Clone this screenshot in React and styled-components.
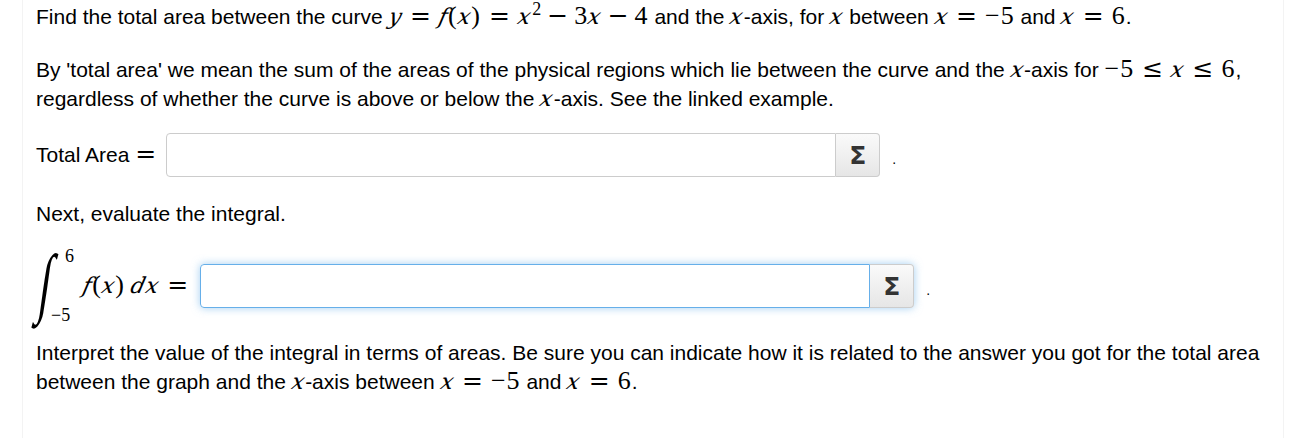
import styled, { createGlobalStyle } from "styled-components";

const Global = createGlobalStyle`
  body {
    margin: 0;
    background: #ffffff;
    color: #000;
    font-family: "Liberation Sans", Arial, sans-serif;
  }
`;

const Page = styled.div`
  margin-left: 22px;
  width: 1262px;
  min-height: 438px;
  box-sizing: border-box;
  border-left: 1px solid #f3f3f3;
  border-right: 1px solid #f3f3f3;
  padding: 2px 0 0 13px;
`;

const Para = styled.p`
  margin: 0 0 ${(p) => p.$after || 24}px;
  font-size: 21px;
  line-height: 29px;
  white-space: nowrap;
`;

// math variables (slanted) and numbers (upright)
const M = styled.span`
  display: inline-block;
  font-family: ${(p) =>
    p.$up ? `"Liberation Serif", "Times New Roman", serif` : `"DejaVu Serif", serif`};
  font-size: ${(p) => (p.$up ? 26 : 22)}px;
  line-height: 0;
  letter-spacing: 1px;
  font-style: ${(p) => (p.$up ? "normal" : "italic")};
  transform: ${(p) => (p.$up ? "none" : "skewX(-13deg)")};
`;

// relations and binary operators
const Op = styled.span`
  font-family: "DejaVu Serif", serif;
  font-size: 25px;
  line-height: 0;
  padding: 0 ${(p) => (p.$bin ? 6 : p.$tight ? 0 : 8)}px;
`;

const Sup = styled.sup`
  font-family: "Liberation Serif", "Times New Roman", serif;
  font-size: 18px;
  font-style: normal;
  vertical-align: 9px;
  line-height: 0;
  margin-left: 1px;
`;

const AnswerRow = styled.div`
  display: flex;
  align-items: center;
  height: ${(p) => p.$h || 44}px;
  margin-bottom: ${(p) => p.$after || 22}px;
  font-size: 21px;
`;

const Label = styled.span`
  margin-right: ${(p) => p.$gap ?? 10}px;
  white-space: nowrap;
`;

const Group = styled.div`
  display: flex;
  height: 44px;
  width: 714px;
  border-radius: 4px;
  box-shadow: ${(p) => (p.$focus ? "0 0 8px rgba(102, 175, 233, 0.6)" : "none")};
`;

const Field = styled.input`
  flex: 1;
  box-sizing: border-box;
  height: 44px;
  border: 1px solid ${(p) => (p.$focus ? "#66afe9" : "#cccccc")};
  border-radius: 4px 0 0 4px;
  outline: none;
  background: #fff;
  padding: 6px 12px;
  font-size: 16px;
`;

const SigmaButton = styled.button`
  width: 44px;
  height: 44px;
  box-sizing: border-box;
  border: 1px solid #cccccc;
  border-left: none;
  border-radius: 0 4px 4px 0;
  background: linear-gradient(#fafafa, #e6e6e6);
  color: #333;
  font-family: "DejaVu Sans", sans-serif;
  font-weight: bold;
  font-size: 25px;
  padding: 0;
  display: flex;
  align-items: center;
  justify-content: center;
`;

const Dot = styled.span`
  margin: 8px 0 0 12px;
  font-size: 14px;
  line-height: 1;
`;

const Integral = styled.div`
  position: relative;
  display: flex;
  align-items: center;
  width: 47px;
  height: 76px;
`;

const IntSign = styled.span`
  font-family: "Liberation Serif", serif;
  font-size: 44px;
  display: inline-block;
  transform: scaleY(1.75) skewX(-14deg);
  line-height: 1;
  margin: -6px 0 0 4px;
`;

const Limit = styled.span`
  position: absolute;
  left: ${(p) => p.$left}px;
  ${(p) => (p.$top ? "top: -2px;" : "bottom: -2px;")}
  font-family: "Liberation Serif", "Times New Roman", serif;
  font-size: 18px;
`;

const AnswerInput = ({ focus }) => (
  <Group $focus={focus}>
    <Field $focus={focus} type="text" />
    <SigmaButton type="button">Σ</SigmaButton>
  </Group>
);

export default function App() {
  return (
    <>
      <Global />
      <Page>
        <Para>
          Find the total area between the curve <M>y</M>
          <Op>=</Op>
          <M>f</M>
          <M $up>(</M>
          <M>x</M>
          <M $up>)</M>
          <Op>=</Op>
          <M>x</M>
          <Sup>2</Sup>
          <Op $bin>−</Op>
          <M $up>3</M>
          <M>x</M>
          <Op $bin>−</Op>
          <M $up>4</M> and the <M>x</M>-axis, for <M>x</M> between <M>x</M>
          <Op>=</Op>
          <M $up>−5</M> and <M>x</M>
          <Op>=</Op>
          <M $up>6</M>.
        </Para>
        <Para $after={20}>
          By 'total area' we mean the sum of the areas of the physical regions
          which lie between the curve and the <M>x</M>-axis for <M $up>−5</M>
          <Op>≤</Op>
          <M>x</M>
          <Op>≤</Op>
          <M $up>6</M>,<br />
          regardless of whether the curve is above or below the <M>x</M>-axis.
          See the linked example.
        </Para>

        <AnswerRow>
          <Label>
            Total Area <Op $tight>=</Op>
          </Label>
          <AnswerInput />
          <Dot>.</Dot>
        </AnswerRow>

        <Para $after={20}>Next, evaluate the integral.</Para>

        <AnswerRow $h={76} $after={14}>
          <Integral>
            <IntSign>∫</IntSign>
            <Limit $top $left={29}>6</Limit>
            <Limit $left={15}>−5</Limit>
          </Integral>
          <Label $gap={4}>
            <M>f</M>
            <M $up>(</M>
            <M>x</M>
            <M $up>)</M> <M>dx</M>
            <Op>=</Op>
          </Label>
          <AnswerInput focus />
          <Dot>.</Dot>
        </AnswerRow>

        <Para>
          Interpret the value of the integral in terms of areas. Be sure you can
          indicate how it is related to the answer you got for the total area
          <br />
          between the graph and the <M>x</M>-axis between <M>x</M>
          <Op>=</Op>
          <M $up>−5</M> and <M>x</M>
          <Op>=</Op>
          <M $up>6</M>.
        </Para>
      </Page>
    </>
  );
}
